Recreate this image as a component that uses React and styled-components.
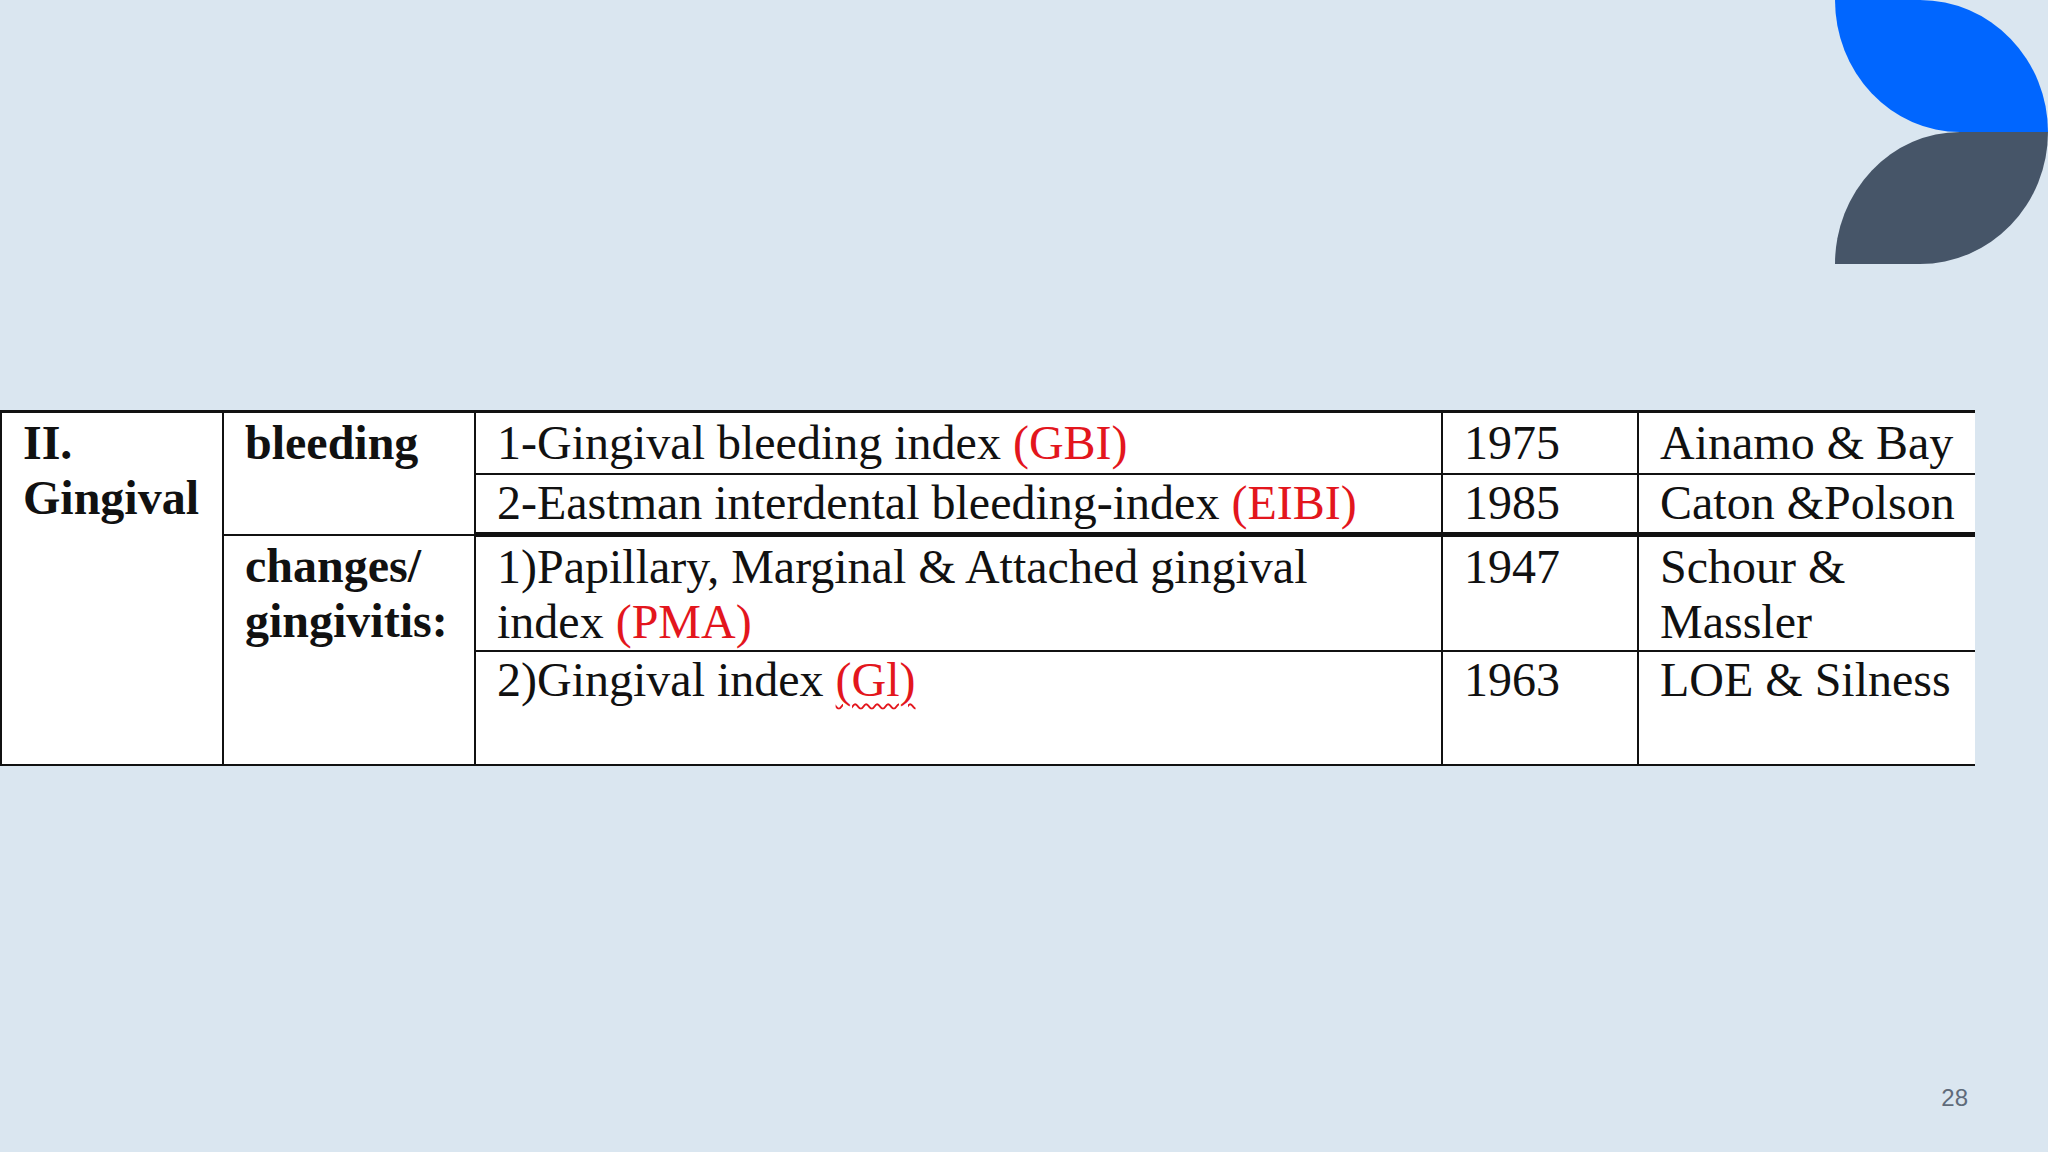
import React from "react"
import styled, { createGlobalStyle } from "styled-components"

const GlobalStyle = createGlobalStyle`
  html, body {
    margin: 0;
    padding: 0;
    background: #dae6f0;
  }
`

const Slide = styled.div`
  position: relative;
  width: 2048px;
  height: 1152px;
  overflow: hidden;
  background: #dae6f0;
  padding-top: 410px;
  box-sizing: border-box;
  font-family: "Liberation Serif", "Times New Roman", serif;
  color: #111;
`

const Table = styled.table`
  border-collapse: collapse;
  table-layout: fixed;
  width: 1974px;
  background: #fff;
  border-top: 3px solid #111;
  border-bottom: 2px solid #111;
  border-left: 2px solid #111;
`

const Col = styled.col`
  width: ${ ({ $w }) => $w }px;
`

const Row = styled.tr`
  height: ${ ({ $h }) => $h }px;
`

const Cell = styled.td`
  vertical-align: top;
  padding: ${ ({ $up }) => $up ? "0" : "2px" } ${ ({ $tight }) => $tight ? "4px" : "20px" } 0 21px;
  font-size: 48px;
  line-height: 1.15;
  font-weight: ${ ({ $bold }) => $bold ? 700 : 400 };
  border-left: 2px solid #111;
  border-top: 2px solid #111;
  border-bottom: ${ ({ $thick }) => $thick ? "5px solid #111" : "2px solid #111" };
`

const Red = styled.span`
  color: #e3161d;
  ${ ({ $spell }) => $spell && `
    text-decoration: underline wavy #e3161d;
    text-decoration-thickness: 1.5px;
    text-underline-offset: 7px;
  ` }
`

const Decoration = styled.svg`
  position: absolute;
  top: 0;
  right: 0;
  width: 213px;
  height: 264px;
`

const PageNumber = styled.div`
  position: absolute;
  right: 80px;
  bottom: 40px;
  font-family: "Liberation Sans", Arial, sans-serif;
  font-size: 24px;
  color: #5f6b7a;
`

const App = () => (
  <Slide>
    <GlobalStyle />
    <Decoration viewBox="0 0 213 264">
      <path d="M0,0 H85 A128,132 0 0 1 213,132 H125 A125,132 0 0 1 0,0 Z" fill="#0066ff" />
      <path d="M0,264 A125,132 0 0 1 125,132 H213 A128,132 0 0 1 85,264 Z" fill="#465568" />
    </Decoration>

    <Table>
      <colgroup>
        <Col $w={ 222 } />
        <Col $w={ 252 } />
        <Col $w={ 967 } />
        <Col $w={ 196 } />
        <Col $w={ 337 } />
      </colgroup>
      <tbody>
        <Row $h={ 62 }>
          <Cell rowSpan={ 4 } $bold>II.<br />Gingival</Cell>
          <Cell rowSpan={ 2 } $bold>bleeding</Cell>
          <Cell>1-Gingival bleeding index <Red>(GBI)</Red></Cell>
          <Cell>1975</Cell>
          <Cell $tight>Ainamo &amp; Bay</Cell>
        </Row>
        <Row $h={ 61 }>
          <Cell $thick $up>2-Eastman interdental bleeding-index <Red>(EIBI)</Red></Cell>
          <Cell $thick $up>1985</Cell>
          <Cell $thick $up $tight>Caton &amp;Polson</Cell>
        </Row>
        <Row $h={ 116 }>
          <Cell rowSpan={ 2 } $bold>changes/<br />gingivitis:</Cell>
          <Cell>1)Papillary, Marginal &amp; Attached gingival index <Red>(PMA)</Red></Cell>
          <Cell>1947</Cell>
          <Cell $tight>Schour &amp; Massler</Cell>
        </Row>
        <Row $h={ 114 }>
          <Cell $up>2)Gingival index <Red $spell>(Gl)</Red></Cell>
          <Cell $up>1963</Cell>
          <Cell $up $tight>LOE &amp; Silness</Cell>
        </Row>
      </tbody>
    </Table>

    <PageNumber>28</PageNumber>
  </Slide>
)

export default App
